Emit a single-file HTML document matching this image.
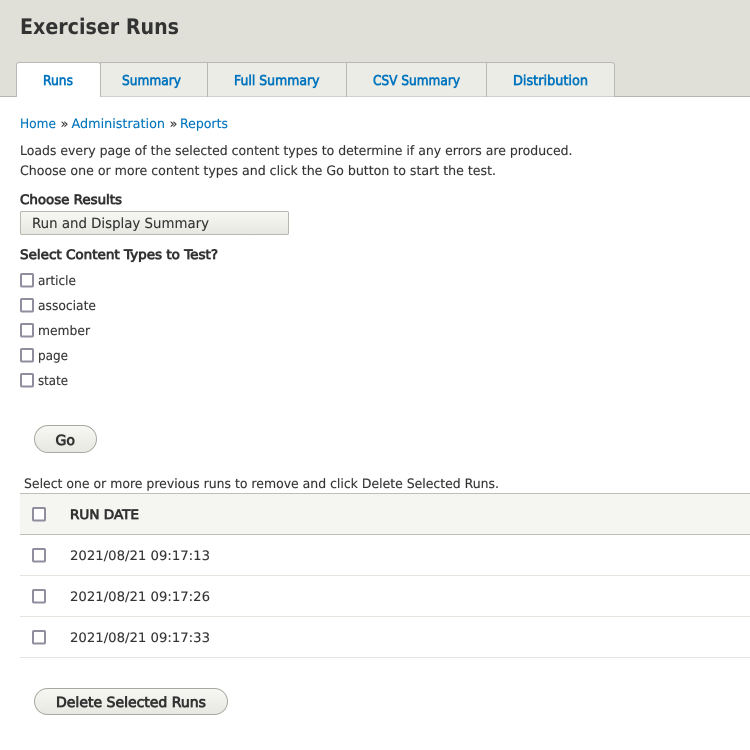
<!DOCTYPE html>
<html lang="en"><head><meta charset="utf-8"><title>Exerciser Runs</title>
<style>
html,body{margin:0;padding:0;background:#fff}
body{width:750px;height:750px;overflow:hidden;position:relative}
svg{position:absolute;left:0;top:0;display:block}
text{font-family:"DejaVu Sans","Liberation Sans",sans-serif;font-size:13px;fill:#333;stroke:#333;stroke-width:.12px;text-rendering:geometricPrecision}
.l{fill:#0074bd;stroke:#0074bd}
.b{font-weight:normal;stroke-width:.8px}
.t{fill:#0074bd;stroke:#0074bd;stroke-width:.65px;font-size:13.5px}
.cb{fill:#fff;stroke:#8f8d9e;stroke-width:2}
</style></head><body>
<svg width="750" height="750" viewBox="0 0 750 750" xmlns="http://www.w3.org/2000/svg">
<defs>
<linearGradient id="g" x1="0" y1="0" x2="0" y2="1"><stop offset="0" stop-color="#f7f7f4"/><stop offset="1" stop-color="#e8e8e2"/></linearGradient>
</defs>
<rect x="0" y="0" width="750" height="96" fill="#e0e0d8"/>
<rect x="0" y="96" width="750" height="1" fill="#b5b5b0"/>
<text x="20" y="34" textLength="159" lengthAdjust="spacingAndGlyphs" style="font-size:21.5px;font-weight:bold;stroke-width:0">Exerciser Runs</text>

<path d="M100.5 96.5V62.5H611.5Q614.5 62.5 614.5 65.5V96.5" fill="#ecece7" stroke="#b8b8b4"/>
<path d="M207.5 62.5V96.5M346.5 62.5V96.5M486.5 62.5V96.5" stroke="#b8b8b4" fill="none"/>
<path d="M16.5 97V65.5Q16.5 62.5 19.5 62.5H97.5Q100.5 62.5 100.5 65.5V97" fill="#fff" stroke="#b8b8b4"/>
<rect x="17" y="95" width="83" height="3" fill="#fff"/>
<text x="43" y="85" textLength="30" lengthAdjust="spacingAndGlyphs" class="t">Runs</text>
<text x="122" y="85" textLength="59" lengthAdjust="spacingAndGlyphs" class="t">Summary</text>
<text x="234" y="85" textLength="85.5" lengthAdjust="spacingAndGlyphs" class="t">Full Summary</text>
<text x="373" y="85" textLength="87" lengthAdjust="spacingAndGlyphs" class="t">CSV Summary</text>
<text x="513" y="85" textLength="75" lengthAdjust="spacingAndGlyphs" class="t">Distribution</text>

<text x="20" y="128" textLength="36" lengthAdjust="spacingAndGlyphs" class="l">Home</text>
<text x="60.5" y="128">»</text>
<text x="71.5" y="128" textLength="93.5" lengthAdjust="spacingAndGlyphs" class="l">Administration</text>
<text x="169.5" y="128">»</text>
<text x="180" y="128" textLength="48" lengthAdjust="spacingAndGlyphs" class="l">Reports</text>

<text x="20" y="155" textLength="552.5" lengthAdjust="spacingAndGlyphs">Loads every page of the selected content types to determine if any errors are produced.</text>
<text x="20" y="175" textLength="476" lengthAdjust="spacingAndGlyphs">Choose one or more content types and click the Go button to start the test.</text>

<text x="20" y="204" textLength="102" lengthAdjust="spacingAndGlyphs" class="b">Choose Results</text>
<rect x="20.5" y="211.5" width="268" height="23" rx="1.5" fill="url(#g)" stroke="#b8b8b0"/>
<text x="32" y="228" textLength="177" lengthAdjust="spacingAndGlyphs" style="font-size:14px">Run and Display Summary</text>

<text x="20" y="259" textLength="198" lengthAdjust="spacingAndGlyphs" class="b">Select Content Types to Test?</text>

<rect class="cb" x="21" y="274" width="12" height="12.5" rx="1"/>
<text x="38" y="285" textLength="38" lengthAdjust="spacingAndGlyphs">article</text>
<rect class="cb" x="21" y="299" width="12" height="12.5" rx="1"/>
<text x="38" y="310" textLength="58" lengthAdjust="spacingAndGlyphs">associate</text>
<rect class="cb" x="21" y="324" width="12" height="12.5" rx="1"/>
<text x="38" y="335" textLength="52" lengthAdjust="spacingAndGlyphs">member</text>
<rect class="cb" x="21" y="349" width="12" height="12.5" rx="1"/>
<text x="38" y="360" textLength="30" lengthAdjust="spacingAndGlyphs">page</text>
<rect class="cb" x="21" y="374" width="12" height="12.5" rx="1"/>
<text x="38" y="385" textLength="30" lengthAdjust="spacingAndGlyphs">state</text>

<rect x="34.5" y="425.5" width="62" height="27" rx="13.5" fill="url(#g)" stroke="#a8a8a0"/>
<text x="55.5" y="445" textLength="19.5" lengthAdjust="spacingAndGlyphs" class="b" style="font-size:14px">Go</text>

<text x="24" y="488" textLength="475" lengthAdjust="spacingAndGlyphs">Select one or more previous runs to remove and click Delete Selected Runs.</text>

<rect x="20" y="493" width="730" height="41" fill="#f5f5f2"/>
<rect x="20" y="493" width="730" height="1" fill="#bebfb9"/>
<rect x="20" y="534" width="730" height="1" fill="#bebfb9"/>
<rect class="cb" x="33" y="508" width="12" height="12.5" rx="1"/>
<text x="70" y="519" textLength="69" lengthAdjust="spacingAndGlyphs" class="b">RUN DATE</text>

<rect class="cb" x="33" y="549" width="12" height="12.5" rx="1"/>
<text x="70" y="560" textLength="140" lengthAdjust="spacingAndGlyphs">2021/08/21 09:17:13</text>
<rect x="20" y="575" width="730" height="1" fill="#e6e4df"/>
<rect class="cb" x="33" y="590" width="12" height="12.5" rx="1"/>
<text x="70" y="601" textLength="140" lengthAdjust="spacingAndGlyphs">2021/08/21 09:17:26</text>
<rect x="20" y="616" width="730" height="1" fill="#e6e4df"/>
<rect class="cb" x="33" y="631" width="12" height="12.5" rx="1"/>
<text x="70" y="642" textLength="140" lengthAdjust="spacingAndGlyphs">2021/08/21 09:17:33</text>
<rect x="20" y="657" width="730" height="1" fill="#e6e4df"/>

<rect x="34.5" y="688.5" width="193" height="26" rx="13" fill="url(#g)" stroke="#a8a8a0"/>
<text x="56" y="707" textLength="150" lengthAdjust="spacingAndGlyphs" class="b" style="font-size:14px">Delete Selected Runs</text>
</svg>
</body></html>
